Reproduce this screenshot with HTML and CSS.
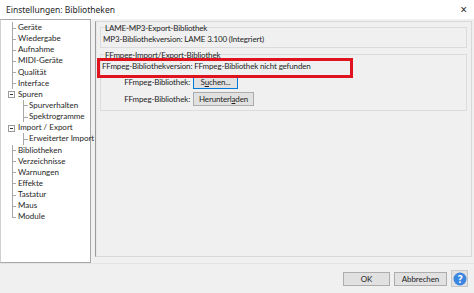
FILE: index.html
```html
<!DOCTYPE html>
<html lang="de">
<head>
<meta charset="utf-8">
<link rel="stylesheet" href="styles.css">
</head>
<body>
<div class="window">
  <div class="titlebar">
    <span class="title">Einstellungen: Bibliotheken</span>
    <span class="close">×</span>
  </div>
  <div class="main">
    <ul class="tree">
      <li class="leaf">Geräte</li>
      <li class="leaf">Wiedergabe</li>
      <li class="leaf">Aufnahme</li>
      <li class="leaf">MIDI-Geräte</li>
      <li class="leaf">Qualität</li>
      <li class="leaf">Interface</li>
      <li class="node"><span class="box"></span>Spuren</li>
      <li class="leaf sub">Spurverhalten</li>
      <li class="leaf sub">Spektrogramme</li>
      <li class="node"><span class="box"></span>Import / Export</li>
      <li class="leaf sub">Erweiterter Import</li>
      <li class="leaf">Bibliotheken</li>
      <li class="leaf">Verzeichnisse</li>
      <li class="leaf">Warnungen</li>
      <li class="leaf">Effekte</li>
      <li class="leaf">Tastatur</li>
      <li class="leaf">Maus</li>
      <li class="leaf last">Module</li>
    </ul>
    <div class="panel">
      <div class="group g1">
        <div class="glabel">LAME-MP3-Export-Bibliothek</div>
        <div class="gline">MP3-Bibliothekversion: LAME 3.100 (Integriert)</div>
      </div>
      <div class="group g2">
        <div class="glabel">FFmpeg-Import/Export-Bibliothek</div>
        <div class="gline version">FFmpeg-Bibliothekversion: FFmpeg-Bibliothek nicht gefunden</div>
        <div class="frow"><span class="flabel">FFmpeg-Bibliothek:</span><span class="btn focus">S<u>u</u>chen...</span></div>
        <div class="frow"><span class="flabel">FFmpeg-Bibliothek:</span><span class="btn">Herunterl<u>a</u>den</span></div>
        <div class="highlight"></div>
      </div>
    </div>
  </div>
  <div class="footer">
    <span class="btn wide">OK</span>
    <span class="btn wide2">Abbrechen</span>
    <span class="help"><svg width="14" height="14" viewBox="0 0 14 14"><circle cx="7" cy="7" r="6.5" fill="#3a86e0"/><text x="7" y="10.6" text-anchor="middle" font-family="Noto Sans, sans-serif" font-size="10" font-weight="bold" fill="#fff">?</text></svg></span>
  </div>
</div>
</body>
</html>
```
FILE: styles.css
```css
* { box-sizing: border-box; }
html, body { margin: 0; padding: 0; }
body {
  width: 474px;
  height: 293px;
  overflow: hidden;
  background: #f0f0f0;
  font-family: Lato, "Noto Sans", sans-serif;
  font-size: 8px;
  color: #1e1e1e;
}
.window { display: flex; flex-direction: column; height: 293px; }
.titlebar {
  height: 19px;
  background: #fff;
  display: flex;
  align-items: center;
  justify-content: space-between;
  padding: 0 6px 0 6px;
  font-family: "Noto Sans", sans-serif;
  font-size: 8.5px;
}
.close { font-size: 12px; color: #333; margin-right: 1px; }
.main { display: flex; height: 244px; }
.tree {
  list-style: none;
  margin: 0;
  padding: 2px 0 0 0;
  width: 91px;
  background: #fff;
  border: 1px solid #a8a8a8;
  border-left-color: #d0d0d0;
  color: #262626;
}
.tree li {
  position: relative;
  height: 11.15px;
  line-height: 11px;
  padding-left: 17px;
  white-space: nowrap;
}
.tree li.sub { padding-left: 28px; }
.tree li.leaf::before {
  content: "";
  position: absolute;
  left: 11px;
  top: 5.5px;
  width: 4px;
  border-top: 1px solid #a8a8a8;
}
.tree li.sub::before { left: 22px; width: 5px; }
.tree li::after {
  content: "";
  position: absolute;
  left: 11px;
  top: 0;
  height: 11.15px;
  border-left: 1px solid #a8a8a8;
}
.tree li.sub::after { left: 22px; }
.tree li.last::after { height: 6px; }
.tree li.node::after { display: none; }
.tree .box {
  position: absolute;
  left: 7px;
  top: 2.5px;
  width: 7px;
  height: 7px;
  border: 1px solid #9a9a9a;
  background: #fff;
  z-index: 1;
}
.tree .box::after {
  content: "";
  position: absolute;
  left: 1px;
  top: 2px;
  width: 3px;
  border-top: 1px solid #333;
}
.panel {
  flex: 1;
  margin: 2px 2px 6px 4px;
  border-left: 1px solid #9a9a9a;
  box-shadow: inset 1px 0 0 #e8e8e8;
  border-top: 1px solid #d8d8d8;
  border-right: 1px solid #d8d8d8;
  border-bottom: 1px solid #d8d8d8;
  padding: 5px 4px 0 4px;
  display: flex;
  flex-direction: column;
  gap: 6px;
  letter-spacing: -0.15px;
}
.group {
  border: 1px solid #dcdcdc;
  position: relative;
}
.glabel {
  line-height: 10px;
  margin-top: -5px;
  padding-left: 4px;
}
.g1 { height: 21px; }
.gline { line-height: 11px; padding-left: 3px; }
.g1 .gline { padding-left: 2px; margin-top: 1px; }
.g2 { height: 57px; }
.version {
  margin-top: 0;
  margin-left: -1px;
  line-height: 13px;
  padding-left: 2px;
}
.frow {
  display: flex;
  align-items: center;
  height: 17px;
}
.flabel {
  width: 92px;
  text-align: right;
  padding-right: 3px;
}
.btn {
  display: inline-flex;
  align-items: center;
  justify-content: center;
  height: 14px;
  padding: 0 5px;
  background: #e1e1e1;
  border: 1px solid #adadad;
  line-height: 12px;
}
.btn.focus { border: 1px solid #0078d7; width: 45px; height: 14px; }
.highlight {
  position: absolute;
  left: -4px;
  top: 3px;
  width: 256px;
  height: 20px;
  border: 3px solid #e0141e;
}
.footer {
  flex: 1;
  display: flex;
  align-items: center;
  justify-content: flex-end;
  gap: 4px;
  padding: 0 6px 0 0;
  border-top: 1px solid #e4e4e4;
  letter-spacing: -0.1px;
}
.wide { width: 47px; }
.wide2 { width: 53px; }
.help {
  width: 17px;
  height: 17px;
  display: inline-flex;
  align-items: center;
  justify-content: center;
  background: #e1e1e1;
  border: 1px solid #c8c8c8;
}
.help svg { display: block; }
```
